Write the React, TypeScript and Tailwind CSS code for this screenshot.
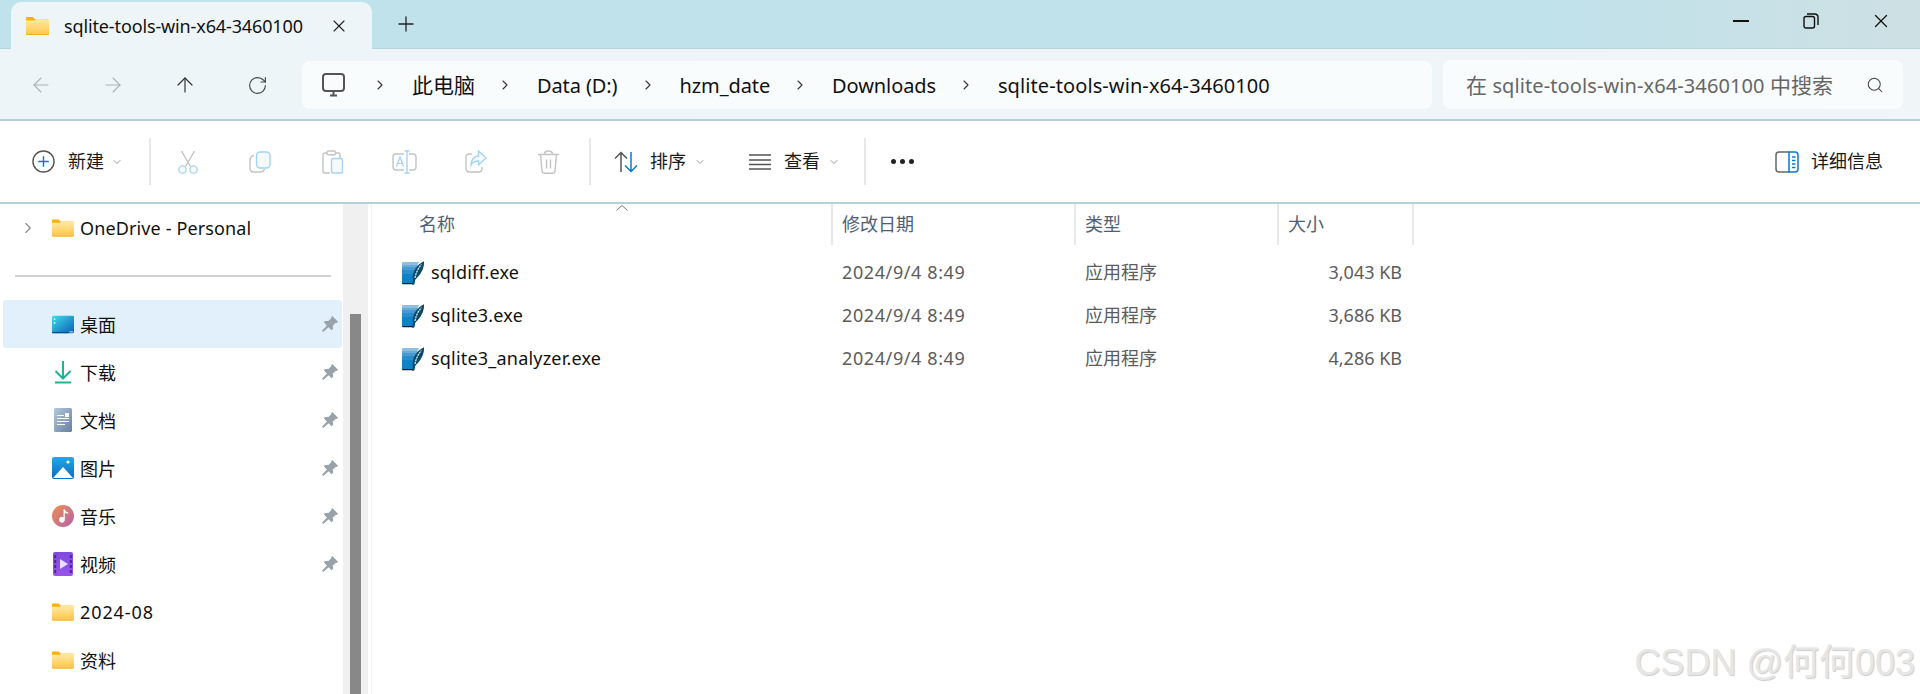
import { ArrowLeft, ArrowRight, ArrowUp, ChevronDown, ChevronRight, Plus, RotateCw, Search, X } from "lucide-react";
import type { ReactNode } from "react";

const crumbs = [
  { label: "此电脑", cls: "text-[21px]" },
  { label: "Data (D:)", cls: "tracking-[-0.1px]" },
  { label: "hzm_date", cls: "tracking-[-0.1px]" },
  { label: "Downloads", cls: "tracking-[-0.1px]" },
  { label: "sqlite-tools-win-x64-3460100", cls: "tracking-[0.09px]" },
];

const files = [
  { name: "sqldiff.exe", size: "3,043 KB" },
  { name: "sqlite3.exe", size: "3,686 KB" },
  { name: "sqlite3_analyzer.exe", size: "4,286 KB" },
];

function FolderIcon({ className = "" }: { className?: string }) {
  return (
    <svg viewBox="0 0 23 18" className={className}>
      <defs>
        <linearGradient id="folderBody" x1="0" y1="0" x2="0" y2="1">
          <stop offset="0" stopColor="#ffe9a6" />
          <stop offset="1" stopColor="#fcc644" />
        </linearGradient>
      </defs>
      <path d="M0 1.2C0 .5.5 0 1.2 0h5.6L9 2.2h13v4H0z" fill="#f9b10f" />
      <path d="M0 3.4h8.6L10 2.2h12c.6 0 1 .4 1 1V17c0 .6-.4 1-1 1H1c-.6 0-1-.4-1-1z" fill="url(#folderBody)" />
      <path d="M0 17h23c0 .6-.4 1-1 1H1c-.6 0-1-.4-1-1z" fill="#f2ae26" />
    </svg>
  );
}

function DesktopIcon() {
  return (
    <svg viewBox="0 0 24 19" className="w-[24px] h-[19px]">
      <defs>
        <linearGradient id="deskFill" x1="0" y1="0" x2="1" y2="1">
          <stop offset="0" stopColor="#3fdcec" />
          <stop offset="1" stopColor="#0a5fb4" />
        </linearGradient>
      </defs>
      <rect width="24" height="19" rx="1.5" fill="url(#deskFill)" />
      <rect x="2" y="3" width="1.6" height="1.6" fill="#fff" />
      <rect x="2" y="7" width="1.6" height="1.6" fill="#fff" />
      <rect x="19" y="17" width="4" height="1" fill="#cfe6f5" />
      <rect y="17.6" width="18" height="1.4" fill="#0a4c8c" />
    </svg>
  );
}

function DownloadIcon() {
  return (
    <svg viewBox="0 0 22 24" className="w-[22px] h-[24px]" fill="none" stroke="#1fb391" strokeWidth="2">
      <path d="M11 1v17M3.5 11l7.5 7.5 7.5-7.5" />
      <path d="M3 22.5h16" />
    </svg>
  );
}

function DocIcon() {
  return (
    <svg viewBox="0 0 18 24" className="w-[18px] h-[24px]">
      <defs>
        <linearGradient id="docFill" x1="0" y1="0" x2="1" y2="1">
          <stop offset="0" stopColor="#b4c9de" />
          <stop offset="1" stopColor="#66809f" />
        </linearGradient>
      </defs>
      <rect width="18" height="24" rx="1.5" fill="url(#docFill)" />
      <path d="M3 7.5h7M3 10.5h12M3 13.5h12M3 16.5h8" stroke="#fff" strokeWidth="1" />
      <rect x="11" y="5" width="4" height="4" fill="#fff" />
    </svg>
  );
}

function PictureIcon() {
  return (
    <svg viewBox="0 0 22 22" className="w-[22px] h-[22px]">
      <defs>
        <linearGradient id="picFill" x1="0" y1="0" x2="0" y2="1">
          <stop offset="0" stopColor="#22a8ea" />
          <stop offset="1" stopColor="#0b6cc0" />
        </linearGradient>
      </defs>
      <rect width="22" height="22" rx="2" fill="url(#picFill)" />
      <path d="M1 21 11 10l10 11z" fill="#fff" />
      <circle cx="16" cy="5" r="1.6" fill="#fff" />
    </svg>
  );
}

function MusicIcon() {
  return (
    <svg viewBox="0 0 24 24" className="w-[24px] h-[24px]">
      <defs>
        <linearGradient id="musicFill" x1="0" y1="0" x2="1" y2="1">
          <stop offset="0" stopColor="#f08f4e" />
          <stop offset="1" stopColor="#b263ab" />
        </linearGradient>
      </defs>
      <circle cx="12" cy="12" r="12" fill="url(#musicFill)" />
      <path d="M12.6 4.5h1.4c.3 2 1.6 3 3.6 3.2v1.9c-1.6 0-2.9-.5-3.6-1.3V16a3.2 3.2 0 1 1-1.4-2.6z" fill="#fff" />
    </svg>
  );
}

function VideoIcon() {
  return (
    <svg viewBox="0 0 20 24" className="w-[20px] h-[24px]">
      <defs>
        <linearGradient id="vidFill" x1="0" y1="0" x2="0" y2="1">
          <stop offset="0" stopColor="#7f4be0" />
          <stop offset="1" stopColor="#9a52ea" />
        </linearGradient>
      </defs>
      <rect width="20" height="24" rx="2" fill="url(#vidFill)" />
      <path d="M1.2 3h2v3h-2zM1.2 8h2v3h-2zM1.2 13h2v3h-2zM1.2 18h2v3h-2zM16.8 3h2v3h-2zM16.8 8h2v3h-2zM16.8 13h2v3h-2zM16.8 18h2v3h-2z" fill="#4b2a80" />
      <path d="M7 7l8 5-8 5z" fill="#e8e0fb" />
    </svg>
  );
}

function PinIcon() {
  return (
    <svg viewBox="0 0 16 16" className="w-[16px] h-[16px]" fill="#98a2aa">
      <path d="M10.2 0 16 5.8l-1.2 1.1-1-.2-3 3 .2 3.2-1.4 1.4-3.1-3.1L1.2 16 0 14.8 4.9 9.4 1.8 6.3l1.4-1.4 3.2.2 3-3-.2-1z" />
    </svg>
  );
}

function SqliteIcon() {
  return (
    <svg viewBox="0 0 22 24" className="w-[22px] h-[24px] shrink-0">
      <defs>
        <linearGradient id="sqlFill" x1="0" y1="0" x2="0" y2="1">
          <stop offset="0" stopColor="#8dbfe2" />
          <stop offset="0.12" stopColor="#8dbfe2" />
          <stop offset="0.12" stopColor="#6aaad8" />
          <stop offset="0.25" stopColor="#6aaad8" />
          <stop offset="0.25" stopColor="#4a9ad2" />
          <stop offset="0.38" stopColor="#4a9ad2" />
          <stop offset="0.38" stopColor="#2a8cca" />
          <stop offset="0.55" stopColor="#2a8cca" />
          <stop offset="0.55" stopColor="#0f84c8" />
          <stop offset="1" stopColor="#0f80c4" />
        </linearGradient>
      </defs>
      <path d="M0 2.2C0 1.400.6 1 1.400 1H17l-2.400 5.500L12.800 22H0z" fill="url(#sqlFill)" />
      <path d="M0 22h12.500v1.300H1.300C.6 23.300 0 22.800 0 22z" fill="#0a2238" />
      <path d="M10 23.800c.2-1.700.6-3.300 1-4.800-.8-3.400 0-7.400 2.200-11C15.200 4.500 18.300 1.800 22 .2c.3 3.200-.5 6.700-2.100 9.900-1.600 3.300-3.800 6.200-6.400 8.200-.6 1.800-1.300 3.600-2 5.500z" fill="#0c4a66" />
      <path d="M13 17c.8-4.500 2.800-9.500 6.400-13.500" stroke="#dff0f8" strokeWidth="1.200" fill="none" strokeDasharray="2.200 .7" />
    </svg>
  );
}

function CutIcon() {
  return (
    <svg viewBox="0 0 20 24" className="w-[20px] h-[24px]" fill="none" strokeWidth="1.400">
      <path d="M3.500 1l9 15.500M16.500 1l-9 15.500" stroke="#c2c2c2" />
      <circle cx="4.500" cy="19.500" r="3.600" stroke="#a3d3f7" />
      <circle cx="15.500" cy="19.500" r="3.600" stroke="#a3d3f7" />
    </svg>
  );
}

function CopyIcon() {
  return (
    <svg viewBox="0 0 22 22" className="w-[22px] h-[22px]" fill="none" strokeWidth="1.400">
      <path d="M5 4.500C2.500 5 1 6.500 1 9v8.500C1 20 2.500 21 4.500 21h6.500c2.500 0 4-1 4.500-3" stroke="#c4c4c4" />
      <rect x="7.500" y="1" width="13.500" height="16" rx="3.500" fill="#f5fafe" stroke="#a3d3f7" />
    </svg>
  );
}

function PasteIcon() {
  return (
    <svg viewBox="0 0 21 24" className="w-[21px] h-[24px]" fill="none" strokeWidth="1.400">
      <path d="M5 3H3C1.800 3 1 3.800 1 5v16.500C1 22.700 1.800 23 3 23h5M14 3h2c1.200 0 2 .8 2 2v3" stroke="#c4c4c4" />
      <rect x="5" y="1" width="8.500" height="3.800" rx="1.500" stroke="#c4c4c4" />
      <rect x="9.500" y="8.500" width="11" height="14.500" rx="1.800" fill="#f5fafe" stroke="#a3d3f7" />
    </svg>
  );
}

function RenameIcon() {
  return (
    <svg viewBox="0 0 25 24" className="w-[25px] h-[24px]" fill="none" strokeWidth="1.400">
      <path d="M12 4H4C2.300 4 1 5.300 1 7v10c0 1.700 1.300 3 3 3h8M17 4h4c1.700 0 3 1.300 3 3v10c0 1.700-1.300 3-3 3h-4" stroke="#c4c4c4" />
      <path d="M15 1.500V22.500M12.500 1h5M12.500 23h5" stroke="#a3d3f7" />
      <path d="M4.500 16.500 8 7l3.500 9.500M5.700 13.500h4.600" stroke="#a3d3f7" strokeWidth="1.200" />
    </svg>
  );
}

function ShareIcon() {
  return (
    <svg viewBox="0 0 22 23" className="w-[22px] h-[23px]" fill="none" strokeWidth="1.400">
      <path d="M7 4H4.500C2.500 4 1 5.500 1 7.500v11C1 20.500 2.500 22 4.500 22h9c2 0 3.500-1.500 3.500-3.500V17" stroke="#c4c4c4" />
      <path d="M13.500 1 21 8l-7.500 7v-4c-3.500 0-5.500 1-7.500 4 .3-5.500 2.800-8.500 7.500-9z" fill="#f5fafe" stroke="#a3d3f7" />
    </svg>
  );
}

function TrashIcon() {
  return (
    <svg viewBox="0 0 21 24" className="w-[21px] h-[24px]" fill="none" stroke="#c4c4c4" strokeWidth="1.400">
      <path d="M0 4.500h21M6.500 4.500c0-2.200 1.500-3.500 4-3.500s4 1.300 4 3.500" />
      <path d="M2.500 4.500 4 21c.2 1.400 1.100 2.300 2.500 2.300h8c1.400 0 2.300-.9 2.500-2.300l1.500-16.500" />
      <path d="M8.500 9.500v9M12.500 9.500v9" />
    </svg>
  );
}

function SortIcon() {
  return (
    <svg viewBox="0 0 24 22" className="w-[24px] h-[22px]" fill="none" strokeWidth="1.500">
      <path d="M7 21V1.500M1 7.500l6-6 6 6" stroke="#555" />
      <path d="M17 1v19.500M11 14.500l6 6 6-6" stroke="#0a78d4" />
    </svg>
  );
}

function ListIcon() {
  return (
    <svg viewBox="0 0 22 16" className="w-[22px] h-[16px]" fill="none" stroke="#555" strokeWidth="1.500">
      <path d="M0 1h22M0 6h22M0 10.500h22M0 15h22" />
    </svg>
  );
}

function DetailsIcon() {
  return (
    <svg viewBox="0 0 24 22" className="w-[24px] h-[22px]" fill="none" strokeWidth="1.500">
      <path d="M14 1H4C2.300 1 1 2.300 1 4v14c0 1.700 1.300 3 3 3h10" stroke="#666" />
      <path d="M14 1h6c1.700 0 3 1.300 3 3v14c0 1.700-1.300 3-3 3h-6z" stroke="#0a78d4" />
      <path d="M17 6h3.500M17 9.500h3.500M17 13h3.500M17 16.500h3.500" stroke="#0a78d4" strokeWidth="1.300" />
    </svg>
  );
}

function NavRow({ icon, label, pinned, active, chevron, labelClass = "" }: { icon: ReactNode; label: string; pinned?: boolean; active?: boolean; chevron?: boolean; labelClass?: string }) {
  return (
    <div className={`ml-[3px] w-[339px] h-[48px] flex items-center rounded-[3px] ${active ? "bg-[#e2f0fb]" : ""}`}>
      <div className="w-[49px] pl-[16px] shrink-0">
        {chevron && <ChevronRight className="w-[18px] h-[22px] text-[#888]" strokeWidth={1.5} />}
      </div>
      <div className="w-[22px] flex justify-center shrink-0">{icon}</div>
      <span className={`ml-[6px] flex-1 text-[18px] text-[#111] ${labelClass}`}>{label}</span>
      {pinned && (
        <span className="mr-[4px]">
          <PinIcon />
        </span>
      )}
    </div>
  );
}

function ToolButton({ children }: { children: ReactNode }) {
  return <div className="w-[72px] flex justify-center shrink-0">{children}</div>;
}

function Caret() {
  return <ChevronDown className="w-[12px] h-[12px] text-[#777]" strokeWidth={1.5} />;
}

export default function App() {
  const folder = <FolderIcon className="w-[22px] h-[18px]" />;

  return (
    <div className="relative w-[1920px] h-[694px] overflow-hidden bg-white flex flex-col font-['Noto_Sans','Noto_Sans_CJK_SC',sans-serif] text-[#1a1a1a]">
      {/* Title bar */}
      <div className="h-[49px] shrink-0 flex bg-gradient-to-r from-[#c0e2eb] via-[#c0e2eb] via-80% to-[#cde0e4] border-b border-[#b6d4dc]">
        <div className="ml-[11px] mt-[2px] w-[361px] h-[47px] bg-[#edf5f8] rounded-t-[10px] flex items-center pl-[15px] relative z-10">
          <FolderIcon className="w-[23px] h-[18px] shrink-0" />
          <span className="ml-[15px] w-[260px] text-[18px] leading-none whitespace-nowrap text-[#111] tracking-[-0.13px]">sqlite-tools-win-x64-3460100</span>
          <X className="ml-[5px] w-[20px] h-[20px] text-[#222]" strokeWidth={1.3} />
        </div>
        <div className="ml-[22px] flex items-center h-[48px]">
          <Plus className="w-[24px] h-[24px] text-[#222]" strokeWidth={1.3} />
        </div>
        <div className="ml-auto flex items-start">
          <div className="w-[70px] h-[42px] flex items-center justify-center">
            <div className="w-[16px] h-[2px] bg-[#111]" />
          </div>
          <div className="w-[70px] h-[42px] flex items-center justify-center">
            <svg viewBox="0 0 16 16" className="w-[16px] h-[16px]" fill="none" stroke="#111" strokeWidth="1.400">
              <rect x="1" y="3.500" width="10.500" height="11.500" rx="2" />
              <path d="M4 1h7.500c2 0 3.500 1.500 3.500 3.500V12" />
            </svg>
          </div>
          <div className="w-[74px] h-[42px] flex items-center justify-center pr-[4px]">
            <X className="w-[22px] h-[22px] text-[#111]" strokeWidth={1.4} />
          </div>
        </div>
      </div>

      {/* Navigation bar */}
      <div className="h-[72px] shrink-0 flex items-start pt-[12px] pl-[5px] bg-gradient-to-r from-[#edf5f8] to-[#f0f5f7] border-b-2 border-[#b5d0d8]">
        <div className="w-[72px] h-[48px] flex items-center justify-center">
          <ArrowLeft className="w-[24px] h-[24px] text-[#a9b2b6]" strokeWidth={1.1} />
        </div>
        <div className="w-[72px] h-[48px] flex items-center justify-center">
          <ArrowRight className="w-[24px] h-[24px] text-[#a9b2b6]" strokeWidth={1.1} />
        </div>
        <div className="w-[72px] h-[48px] flex items-center justify-center">
          <ArrowUp className="w-[24px] h-[24px] text-[#333]" strokeWidth={1.2} />
        </div>
        <div className="w-[72px] h-[48px] flex items-center justify-center">
          <RotateCw className="w-[21px] h-[21px] text-[#444]" strokeWidth={1.3} />
        </div>
        <div className="ml-[9px] w-[1130px] h-[48px] rounded-[8px] bg-[#f9fcfd] flex items-center pl-[20px] text-[20px]">
          <svg viewBox="0 0 23 24" className="w-[23px] h-[24px] shrink-0 mr-[27px]" fill="none" stroke="#555" strokeWidth="2">
            <rect x="1" y="1" width="21" height="17" rx="3" />
            <path d="M8 22.500h7M11.500 18v4" />
          </svg>
          {crumbs.map((c) => (
            <div key={c.label} className="flex items-center gap-[24px] mr-[22px]">
              <ChevronRight className="w-[16px] h-[20px] text-[#333]" strokeWidth={1.6} />
              <span className={`whitespace-nowrap text-[#111] pt-[2px] ${c.cls}`}>{c.label}</span>
            </div>
          ))}
        </div>
        <div className="ml-[11px] -mt-[1px] w-[460px] h-[49px] rounded-[8px] bg-[#f9fcfd] flex items-center pl-[23px] pr-[19px]">
          <span className="flex-1 text-[20px] text-[#666] whitespace-nowrap pt-[2px] tracking-[0.1px]">
            <span className="text-[21px]">在</span> sqlite-tools-win-x64-3460100 <span className="text-[21px]">中搜索</span>
          </span>
          <Search className="w-[18px] h-[18px] text-[#444]" strokeWidth={1.4} />
        </div>
      </div>

      {/* Toolbar */}
      <div className="h-[83px] shrink-0 flex items-center bg-white border-b-2 border-[#b5d0d8] text-[18px]">
        <div className="w-[149px] shrink-0 flex items-center pl-[32px]">
          <svg viewBox="0 0 24 24" className="w-[23px] h-[23px] shrink-0" fill="none" strokeWidth="1.500">
            <circle cx="12" cy="12" r="11" stroke="#555" />
            <path d="M12 6.500v11M6.500 12h11" stroke="#0a78d4" />
          </svg>
          <span className="ml-[13px]">新建</span>
          <span className="ml-[7px]">
            <Caret />
          </span>
        </div>
        <div className="w-[2px] h-[47px] bg-[#e8e8e8] shrink-0" />
        <div className="ml-[1px] flex items-center">
          <ToolButton><CutIcon /></ToolButton>
          <ToolButton><CopyIcon /></ToolButton>
          <ToolButton><PasteIcon /></ToolButton>
          <ToolButton><RenameIcon /></ToolButton>
          <ToolButton><ShareIcon /></ToolButton>
          <ToolButton><TrashIcon /></ToolButton>
        </div>
        <div className="ml-[5px] w-[2px] h-[47px] bg-[#e8e8e8] shrink-0" />
        <div className="ml-[23px] flex items-center">
          <SortIcon />
          <span className="ml-[12px]">排序</span>
          <span className="ml-[8px]">
            <Caret />
          </span>
        </div>
        <div className="ml-[43px] flex items-center">
          <ListIcon />
          <span className="ml-[13px]">查看</span>
          <span className="ml-[8px]">
            <Caret />
          </span>
        </div>
        <div className="ml-[24px] w-[2px] h-[47px] bg-[#e8e8e8] shrink-0" />
        <div className="ml-[25px] flex gap-[4px]">
          <div className="w-[5px] h-[5px] rounded-full bg-[#222]" />
          <div className="w-[5px] h-[5px] rounded-full bg-[#222]" />
          <div className="w-[5px] h-[5px] rounded-full bg-[#222]" />
        </div>
        <div className="ml-auto pr-[37px] flex items-center">
          <DetailsIcon />
          <span className="ml-[12px]">详细信息</span>
        </div>
      </div>

      {/* Body */}
      <div className="flex-1 flex min-h-0">
        <div className="w-[343px] shrink-0 flex flex-col">
          <NavRow chevron icon={folder} label="OneDrive - Personal" labelClass="tracking-[0.13px]" />
          <div className="h-[48px] flex items-center pl-[15px]">
            <div className="w-[316px] h-[2px] bg-[#d3d3d3]" />
          </div>
          <NavRow active pinned icon={<DesktopIcon />} label="桌面" labelClass="pt-[2px]" />
          <NavRow pinned icon={<DownloadIcon />} label="下载" labelClass="pt-[2px]" />
          <NavRow pinned icon={<DocIcon />} label="文档" labelClass="pt-[2px]" />
          <NavRow pinned icon={<PictureIcon />} label="图片" labelClass="pt-[2px]" />
          <NavRow pinned icon={<MusicIcon />} label="音乐" labelClass="pt-[2px]" />
          <NavRow pinned icon={<VideoIcon />} label="视频" labelClass="pt-[2px]" />
          <NavRow icon={folder} label="2024-08" labelClass="tracking-[0.9px]" />
          <NavRow icon={folder} label="资料" labelClass="pt-[2px]" />
        </div>
        <div className="w-[25px] shrink-0 bg-[#f0f0f0] pt-[110px] flex justify-center">
          <div className="w-[11px] bg-[#888]" />
        </div>
        <div className="w-[3px] shrink-0" />
        <div className="w-px shrink-0 bg-[#f0f0f0]" />

        <div className="flex-1 flex flex-col">
          <div className="relative grid grid-cols-[461px_243px_203px_135px] h-[41px] text-[18px] text-[#4f6075]">
            <div className="pl-[47px] flex items-center border-r-2 border-[#e8e8e8]">名称</div>
            <div className="pl-[9px] flex items-center border-r-2 border-[#e8e8e8]">修改日期</div>
            <div className="pl-[9px] flex items-center border-r-2 border-[#e8e8e8]">类型</div>
            <div className="pl-[9px] flex items-center border-r-2 border-[#e8e8e8]">大小</div>
            <svg viewBox="0 0 12 6" className="absolute left-[244px] top-[1px] w-[12px] h-[6px]" fill="none" stroke="#777" strokeWidth="1">
              <path d="M.5 5.500 6 .5l5.500 5" />
            </svg>
          </div>
          <div className="mt-[6px] flex flex-col">
            {files.map((f) => (
              <div key={f.name} className="grid grid-cols-[461px_243px_203px_135px] h-[43px] items-center text-[18px] text-[#5c5c5c]">
                <div className="pl-[30px] flex items-center gap-[7px] text-[#111] tracking-[0.2px]">
                  <SqliteIcon />
                  <span>{f.name}</span>
                </div>
                <div className="pl-[9px] tracking-[0.6px]">2024/9/4 8:49</div>
                <div className="pl-[9px]">应用程序</div>
                <div className="pr-[12px] text-right">{f.size}</div>
              </div>
            ))}
          </div>
        </div>
      </div>

      {/* Watermark */}
      <div className="absolute right-[5px] top-[641px] text-[36px] leading-[44px] whitespace-nowrap text-[#e6e6e6] font-['Liberation_Sans','Noto_Sans_CJK_SC',sans-serif] [text-shadow:1px_1px_1px_#cccccc]">
        CSDN @何何003
      </div>
    </div>
  );
}
